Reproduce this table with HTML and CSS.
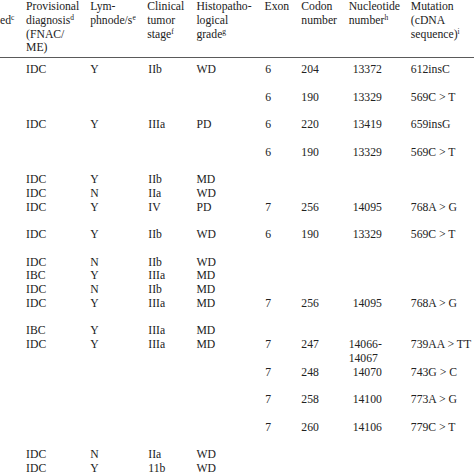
FILE: index.html
```html
<!DOCTYPE html>
<html>
<head>
<meta charset="utf-8">
<link rel="stylesheet" href="styles.css">
</head>
<body>
<table class="tbl">
  <colgroup>
    <col class="c0"><col class="c1"><col class="c2"><col class="c3"><col class="c4"><col class="c5"><col class="c6"><col class="c7"><col class="c8">
  </colgroup>
  <thead>
    <tr>
      <th class="cut"><br>ed<sup>c</sup></th>
      <th>Provisional<br>diagnosis<sup>d</sup><br>(FNAC/<br>ME)</th>
      <th>Lym-<br>phnode/s<sup>e</sup></th>
      <th>Clinical<br>tumor<br>stage<sup>f</sup></th>
      <th>Histopatho-<br>logical<br>grade<sup>g</sup></th>
      <th>Exon</th>
      <th>Codon<br>number</th>
      <th>Nucleotide<br>number<sup>h</sup></th>
      <th>Mutation<br>(cDNA<br>sequence)<sup>i</sup></th>
    </tr>
  </thead>
  <tbody>
    <tr class="first gap"><td></td><td>IDC</td><td>Y</td><td class="st">IIb</td><td>WD</td><td class="ex">6</td><td>204</td><td class="nu">13372</td><td>612insC</td></tr>
    <tr class="gap"><td></td><td></td><td></td><td></td><td></td><td class="ex">6</td><td>190</td><td class="nu">13329</td><td>569C &gt; T</td></tr>
    <tr class="gap"><td></td><td>IDC</td><td>Y</td><td class="st">IIIa</td><td>PD</td><td class="ex">6</td><td>220</td><td class="nu">13419</td><td>659insG</td></tr>
    <tr class="gap"><td></td><td></td><td></td><td></td><td></td><td class="ex">6</td><td>190</td><td class="nu">13329</td><td>569C &gt; T</td></tr>
    <tr><td></td><td>IDC</td><td>Y</td><td class="st">IIb</td><td>MD</td><td></td><td></td><td></td><td></td></tr>
    <tr><td></td><td>IDC</td><td>N</td><td class="st">IIa</td><td>WD</td><td></td><td></td><td></td><td></td></tr>
    <tr class="gap"><td></td><td>IDC</td><td>Y</td><td class="st">IV</td><td>PD</td><td class="ex">7</td><td>256</td><td class="nu">14095</td><td>768A &gt; G</td></tr>
    <tr class="gap"><td></td><td>IDC</td><td>Y</td><td class="st">IIb</td><td>WD</td><td class="ex">6</td><td>190</td><td class="nu">13329</td><td>569C &gt; T</td></tr>
    <tr><td></td><td>IDC</td><td>N</td><td class="st">IIb</td><td>WD</td><td></td><td></td><td></td><td></td></tr>
    <tr><td></td><td>IBC</td><td>Y</td><td class="st">IIIa</td><td>MD</td><td></td><td></td><td></td><td></td></tr>
    <tr><td></td><td>IDC</td><td>N</td><td class="st">IIb</td><td>MD</td><td></td><td></td><td></td><td></td></tr>
    <tr class="gap"><td></td><td>IDC</td><td>Y</td><td class="st">IIIa</td><td>MD</td><td class="ex">7</td><td>256</td><td class="nu">14095</td><td>768A &gt; G</td></tr>
    <tr><td></td><td>IBC</td><td>Y</td><td class="st">IIIa</td><td>MD</td><td></td><td></td><td></td><td></td></tr>
    <tr><td></td><td>IDC</td><td>Y</td><td class="st">IIIa</td><td>MD</td><td class="ex">7</td><td>247</td><td>14066-<br>14067</td><td>739AA &gt; TT</td></tr>
    <tr class="gap"><td></td><td></td><td></td><td></td><td></td><td class="ex">7</td><td>248</td><td class="nu">14070</td><td>743G &gt; C</td></tr>
    <tr class="gap"><td></td><td></td><td></td><td></td><td></td><td class="ex">7</td><td>258</td><td class="nu">14100</td><td>773A &gt; G</td></tr>
    <tr class="gap"><td></td><td></td><td></td><td></td><td></td><td class="ex">7</td><td>260</td><td class="nu">14106</td><td>779C &gt; T</td></tr>
    <tr><td></td><td>IDC</td><td>N</td><td class="st">IIa</td><td>WD</td><td></td><td></td><td></td><td></td></tr>
    <tr><td></td><td>IDC</td><td>Y</td><td class="st">11b</td><td>WD</td><td></td><td></td><td></td><td></td></tr>
  </tbody>
</table>
</body>
</html>
```

FILE: styles.css
```css
html, body {
  margin: 0;
  padding: 0;
  background: #ffffff;
  overflow: hidden;
}

.tbl {
  width: 474px;
  table-layout: fixed;
  border-collapse: collapse;
  border-spacing: 0;
  font-family: "Liberation Serif", "Times New Roman", serif;
  font-size: 11.7px;
  line-height: 13.75px;
  color: #222222;
}

.c0 { width: 26px; }
.c1 { width: 64px; }
.c2 { width: 57px; }
.c3 { width: 49px; }
.c4 { width: 68px; }
.c5 { width: 36.7px; }
.c6 { width: 47.3px; }
.c7 { width: 62px; }
.c8 { width: 63px; }

.tbl th,
.tbl td {
  padding: 0;
  text-align: left;
  vertical-align: top;
  white-space: nowrap;
  font-weight: normal;
}

.tbl th {
  height: 55px;
  padding-bottom: 1.5px;
  border-bottom: 1px solid #5a5a5a;
}

.tbl th.cut {
  text-indent: -1px;
}

.tbl sup {
  font-size: 7.5px;
  line-height: 0;
  vertical-align: 4px;
}

.tbl tr.first td {
  padding-top: 5.5px;
}

.tbl tr.gap td {
  padding-bottom: 13.75px;
}

.tbl td.st {
  padding-left: 1px;
}

.tbl td.ex {
  padding-left: 0.7px;
}

.tbl td.nu {
  padding-left: 4px;
}
```
